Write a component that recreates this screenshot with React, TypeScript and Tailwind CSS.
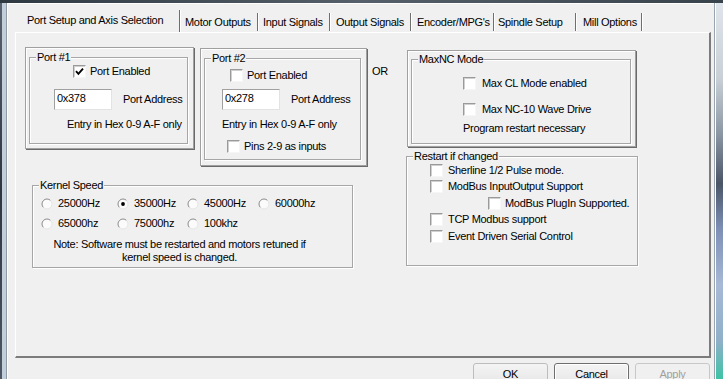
import React from 'react';

const tabs = [
  { label: 'Motor Outputs', cls: 'w-[78px] pl-[5px]' },
  { label: 'Input Signals', cls: 'w-[72px] pl-[5px]' },
  { label: 'Output Signals', cls: 'w-[81px] pl-[6px]' },
  { label: "Encoder/MPG's", cls: 'w-[83px] pl-[6px]' },
  { label: 'Spindle Setup', cls: 'w-[82px] pl-[4px]' },
  { label: 'Mill Options', cls: 'w-[66px] pl-[7px]' },
];

function Check({ checked = false }: { checked?: boolean }) {
  return (
    <span className="relative inline-block w-[13px] h-[13px] shrink-0 bg-white border border-t-[#9a9a9a] border-l-[#9a9a9a] border-r-[#f6f6f6] border-b-[#f6f6f6] shadow-[inset_1px_1px_0_#d0d0d0]">
      {checked && (
        <svg className="absolute left-0 top-0" width="11" height="11" viewBox="0 0 11 11">
          <path d="M2 5.2 L4.4 7.8 L9 2.6" stroke="#000" strokeWidth="1.9" fill="none" />
        </svg>
      )}
    </span>
  );
}

function Radio({ checked = false }: { checked?: boolean }) {
  return (
    <svg width="12" height="12" viewBox="0 0 12 12" className="shrink-0">
      <circle cx="6" cy="6" r="5" fill="#fbfbfb" />
      <path d="M9.54 2.46 A5 5 0 0 0 2.46 9.54" stroke="#8a8a8a" fill="none" />
      <path d="M2.46 9.54 A5 5 0 0 0 9.54 2.46" stroke="#e6e6e6" fill="none" />
      {checked && <circle cx="6" cy="6" r="1.9" fill="#000" />}
    </svg>
  );
}

function TextBox({ value }: { value: string }) {
  return (
    <div className="w-[58px] h-[21px] shrink-0 bg-white border border-t-[#a0a0a0] border-l-[#a0a0a0] border-r-[#e3e3e3] border-b-[#e3e3e3] pl-[2px] pt-[2px]">
      {value}
    </div>
  );
}

function Frame({ className, children }: { className: string; children: React.ReactNode }) {
  return (
    <div className={`shrink-0 border border-[#a0a0a0] shadow-[inset_1px_1px_0_#fff,1px_1px_0_#6a6a6a] ${className}`}>
      {children}
    </div>
  );
}

function Group({ title, className, children }: { title: string; className: string; children: React.ReactNode }) {
  return (
    <div className={`relative shrink-0 border border-[#a6a6a6] shadow-[inset_1px_1px_0_#fff,1px_1px_0_#fff] ${className}`}>
      <span className="absolute left-[6px] top-[-7px] px-[1px] bg-[#f0f0f0] whitespace-nowrap">{title}</span>
      {children}
    </div>
  );
}

function CheckRow({ label, checked, className }: { label: string; checked?: boolean; className: string }) {
  return (
    <div className={`flex items-center whitespace-nowrap ${className}`}>
      <Check checked={checked} />
      <span>{label}</span>
    </div>
  );
}

function RadioItem({ label, checked, className }: { label: string; checked?: boolean; className: string }) {
  return (
    <div className={`flex items-center gap-[5px] whitespace-nowrap ${className}`}>
      <Radio checked={checked} />
      <span>{label}</span>
    </div>
  );
}

export default function App() {
  return (
    <div className="w-[723px] h-[379px] overflow-hidden flex flex-col bg-[#f0f0f0] text-black font-['Liberation_Sans',Arial,sans-serif] text-[11px] tracking-[-0.3px] leading-[13px]">
      <div className="h-[3px] shrink-0 bg-gradient-to-r from-[#2f3942] via-[#56606a] to-[#39434c]" />
      <div className="flex flex-1 min-h-0">
        <div className="flex shrink-0">
          <div className="w-[2px] bg-gradient-to-b from-[#5a6470] via-[#2e3640] to-[#4d5864]" />
          <div className="w-[4px] bg-[#c2ced9]" />
          <div className="w-[1px] bg-[#8e9aa6]" />
          <div className="w-[1px] bg-white" />
        </div>

        <div className="w-[706px] shrink-0 flex flex-col border-t border-white">
          {/* tabs */}
          <div className="h-[28px] shrink-0 flex items-end pl-[2px]">
            <div className="w-[170px] h-[22px] flex items-center pl-[17px] pb-[1px] border-r border-r-[#6f6f6f] shadow-[1px_0_0_#fff] whitespace-nowrap">
              Port Setup and Axis Selection
            </div>
            {tabs.map((t) => (
              <div
                key={t.label}
                className={`h-[18px] mb-[1px] flex items-center border-r border-r-[#6f6f6f] shadow-[1px_0_0_#fff] whitespace-nowrap ${t.cls}`}
              >
                {t.label}
              </div>
            ))}
          </div>

          {/* tab page */}
          <div className="ml-[7px] w-[696px] h-[326px] shrink-0 flex pl-[9px] pt-[14px] border-t border-l border-white border-r-2 border-r-[#7c7c7c] border-b-2 border-b-[#7c7c7c]">
            <div className="w-[381px] shrink-0 flex flex-col">
              <div className="flex items-start">
                <Frame className="w-[169px] h-[102px] pl-[3px] pt-[9px]">
                  <Group title="Port #1" className="w-[159px] h-[87px]">
                    <CheckRow label="Port Enabled" checked className="gap-[4px] ml-[43px] mt-[7px] h-[13px]" />
                    <div className="flex items-center gap-[11px] ml-[24px] mt-[11px]">
                      <TextBox value="0x378" />
                      <span className="whitespace-nowrap">Port Address</span>
                    </div>
                    <div className="ml-[37px] mt-[8px] whitespace-nowrap">Entry in Hex 0-9 A-F only</div>
                  </Group>
                </Frame>
                <Frame className="w-[167px] h-[118px] pl-[3px] pt-[9px] mt-[1px] ml-[6px]">
                  <Group title="Port #2" className="w-[157px] h-[102px]">
                    <CheckRow label="Port Enabled" className="gap-[4px] ml-[25px] mt-[10px] h-[13px]" />
                    <div className="flex items-center gap-[11px] ml-[17px] mt-[7px]">
                      <TextBox value="0x278" />
                      <span className="whitespace-nowrap">Port Address</span>
                    </div>
                    <div className="ml-[17px] mt-[8px] whitespace-nowrap">Entry in Hex 0-9 A-F only</div>
                    <CheckRow label="Pins 2-9 as inputs" className="gap-[4px] ml-[22px] mt-[9px] h-[13px]" />
                  </Group>
                </Frame>
                <div className="ml-[5px] mt-[18px]">OR</div>
              </div>

              <Group title="Kernel Speed" className="w-[321px] h-[83px] ml-[7px] mt-[19px]">
                <div className="pl-[8px] pt-[11px]">
                  <div className="flex h-[13px] items-center">
                    <RadioItem label="25000Hz" className="w-[76px]" />
                    <RadioItem label="35000Hz" checked className="w-[70px]" />
                    <RadioItem label="45000Hz" className="w-[71px]" />
                    <RadioItem label="60000hz" className="" />
                  </div>
                  <div className="flex h-[13px] items-center mt-[7px]">
                    <RadioItem label="65000hz" className="w-[76px]" />
                    <RadioItem label="75000hz" className="w-[70px]" />
                    <RadioItem label="100khz" className="w-[71px]" />
                  </div>
                </div>
                <div className="ml-[7px] w-[279px] mt-[8px] text-center whitespace-nowrap">
                  Note: Software must be restarted and motors retuned if
                  <br />
                  kernel speed is changed.
                </div>
              </Group>
            </div>

            <div className="flex flex-col">
              <Frame className="w-[229px] h-[97px] ml-[1px] mt-[3px] pl-[3px] pt-[8px]">
                <Group title="MaxNC Mode" className="w-[220px] h-[85px]">
                  <CheckRow label="Max CL Mode enabled" className="gap-[6px] ml-[51px] mt-[17px] h-[13px]" />
                  <CheckRow label="Max NC-10 Wave Drive" className="gap-[6px] ml-[51px] mt-[13px] h-[13px]" />
                  <div className="ml-[51px] mt-[6px] whitespace-nowrap">Program restart necessary</div>
                </Group>
              </Frame>
              <Group title="Restart if changed" className="w-[232px] h-[110px] mt-[9px] pl-[23px] pt-[5px]">
                <CheckRow label="Sherline 1/2 Pulse mode." className="gap-[5px] h-[16.5px]" />
                <CheckRow label="ModBus InputOutput Support" className="gap-[5px] h-[16.5px]" />
                <CheckRow label="ModBus PlugIn Supported." className="gap-[4px] h-[16.5px] ml-[58px]" />
                <CheckRow label="TCP Modbus support" className="gap-[5px] h-[16.5px]" />
                <CheckRow label="Event Driven Serial Control" className="gap-[5px] h-[16.5px]" />
              </Group>
            </div>
          </div>

          {/* buttons */}
          <div className="flex justify-end gap-[6px] pr-[4px] mt-[5px]">
            <div className="w-[75px] h-[23px] shrink-0 flex items-center justify-center rounded-[3px] border border-[#bdbdbd] bg-gradient-to-b from-[#f4f4f4] to-[#e6e6e6]">
              OK
            </div>
            <div className="w-[75px] h-[23px] shrink-0 flex items-center justify-center rounded-[3px] border border-[#6e6e6e] bg-gradient-to-b from-[#f4f4f4] to-[#e6e6e6] shadow-[inset_0_0_0_1px_#fff]">
              Cancel
            </div>
            <div className="w-[75px] h-[23px] shrink-0 flex items-center justify-center rounded-[3px] border border-[#c8c8c8] bg-[#f0f0f0] text-[#a0a0a0]">
              Apply
            </div>
          </div>
        </div>

        <div className="flex flex-1">
          <div className="w-[1px] bg-[#9aa4ae]" />
          <div className="w-[1px] bg-white" />
          <div className="flex-1 bg-[linear-gradient(to_bottom,#dfe5ea_0%,#c9d0d6_20%,#8a96a4_35%,#4a5566_48%,#7d8fb5_60%,#a7b9d6_75%,#8fb0c8_90%,#3ec3a6_100%)]" />
        </div>
      </div>
    </div>
  );
}
